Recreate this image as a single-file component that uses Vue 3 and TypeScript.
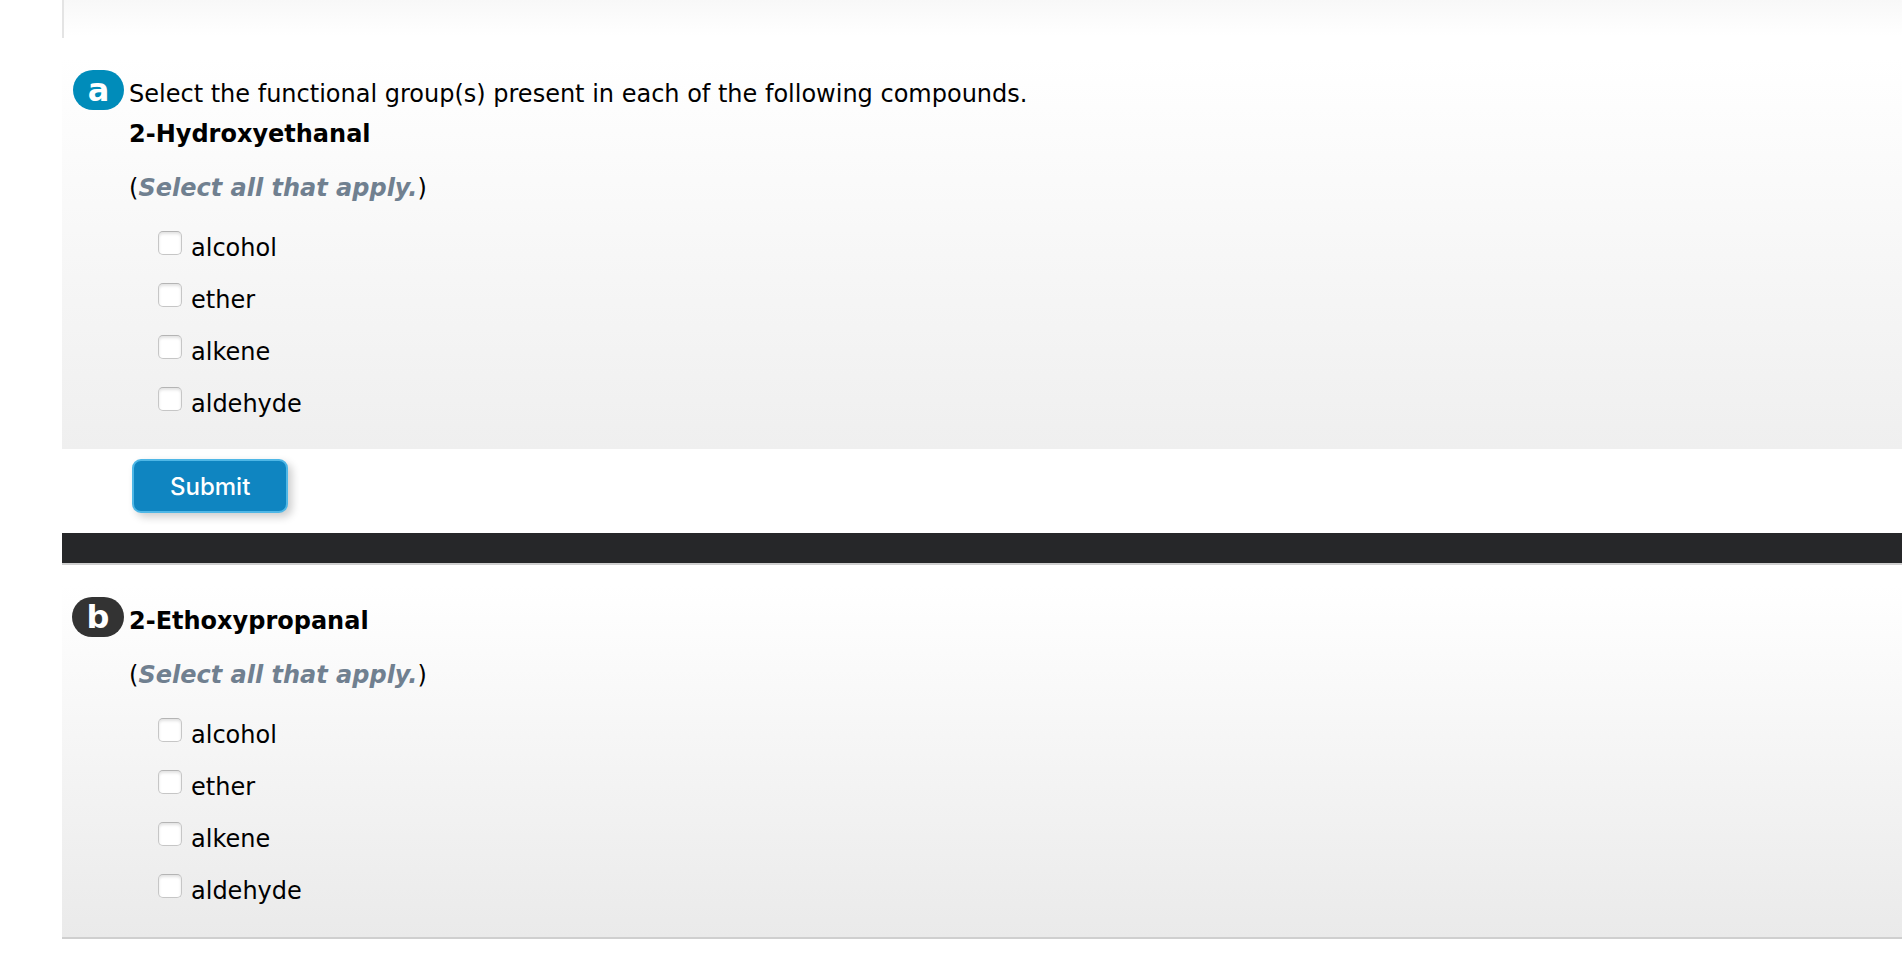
<script setup lang="ts">
import { ref } from 'vue'

interface Part {
  id: string
  intro?: string
  compound: string
  active: boolean
}

const parts: Part[] = [
  {
    id: 'a',
    intro: 'Select the functional group(s) present in each of the following compounds.',
    compound: '2-Hydroxyethanal',
    active: true,
  },
  { id: 'b', compound: '2-Ethoxypropanal', active: false },
]

const groups: string[] = ['alcohol', 'ether', 'alkene', 'aldehyde']
const answers = ref<Record<string, string[]>>({ a: [], b: [] })
</script>

<template>
  <main class="page">
    <div class="previous"></div>
    <form v-for="part in parts" :key="part.id" @submit.prevent>
      <section class="part" :class="{ locked: !part.active }">
        <div class="marker">
          <span class="badge" :class="{ current: part.active }">{{ part.id }}</span>
        </div>
        <div class="question">
          <p v-if="part.intro" class="line">{{ part.intro }}</p>
          <h2 class="line compound">{{ part.compound }}</h2>
          <p class="line hint">(<em>Select all that apply.</em>)</p>
          <ul class="options">
            <li v-for="group in groups" :key="group">
              <label class="option">
                <input v-model="answers[part.id]" type="checkbox" :value="group" />
                <span>{{ group }}</span>
              </label>
            </li>
          </ul>
        </div>
      </section>
      <template v-if="part.active">
        <div class="actions">
          <button type="submit" class="submit">Submit</button>
        </div>
        <div class="divider"></div>
      </template>
    </form>
  </main>
</template>

<style>
body {
  margin: 0;
  background: #fff;
}
</style>

<style scoped>
.page {
  margin-left: 62px;
  color: #000;
  font-family: Verdana, "DejaVu Sans", sans-serif;
  font-size: 24px;
}

.previous {
  height: 38px;
  box-sizing: border-box;
  border-left: 2px solid #e4e4e4;
  background: linear-gradient(#f8f8f8, #fff 36px);
}

.part {
  display: flex;
  padding: 36px 0 19px;
  background: linear-gradient(#fff, #fff 20px, #efefef);
}

.part.locked {
  padding-bottom: 20px;
  background: linear-gradient(#fff, #fff 20px, #eaeaea);
  border-bottom: 2px solid #cfcfcf;
}

.marker {
  flex: none;
  width: 62px;
  margin: -4px 5px 0 0;
  display: flex;
  justify-content: flex-end;
}

.badge {
  box-sizing: border-box;
  width: 52px;
  height: 40px;
  border-radius: 20px;
  background: #333;
  color: #fff;
  font-size: 32px;
  font-weight: bold;
  line-height: 40px;
  text-align: center;
}

.badge.current {
  width: 51px;
  background: #008cba;
}

.question {
  flex: 1;
  min-width: 0;
}

.line {
  margin: 0;
  font-size: 24px;
  line-height: 40px;
}

.compound {
  font-weight: bold;
}

.hint {
  margin-top: 14px;
}

.hint em {
  color: #708090;
  font-weight: bold;
  font-style: italic;
}

.options {
  list-style: none;
  margin: 14px 0 0;
  padding: 0 0 0 29px;
}

.option {
  display: inline-flex;
  align-items: flex-start;
  gap: 9px;
  line-height: 52px;
}

.option input {
  appearance: none;
  box-sizing: border-box;
  width: 24px;
  height: 24px;
  margin: 9px 0 0;
  border: 1px solid #c6c6c6;
  border-top-color: #b4b4b4;
  border-radius: 5px;
  background: #fff;
  box-shadow: inset 0 2px 3px #e2e2e2;
}

.option input:checked {
  background: #0f85c1;
}

.actions {
  padding: 10px 0 20px 70px;
  background: #fff;
}

.submit {
  display: block;
  box-sizing: border-box;
  height: 54px;
  padding: 0 36px;
  border: 2px solid #4fb7e6;
  border-radius: 9px;
  background: #0f85c1;
  box-shadow: 4px 4px 8px rgba(0, 0, 0, 0.2);
  color: #fff;
  font-family: Inter, "Liberation Sans", sans-serif;
  font-size: 24px;
  font-weight: 500;
  cursor: pointer;
}

.divider {
  height: 30px;
  background: #262729;
  border-bottom: 2px solid #cfcfcf;
}
</style>
